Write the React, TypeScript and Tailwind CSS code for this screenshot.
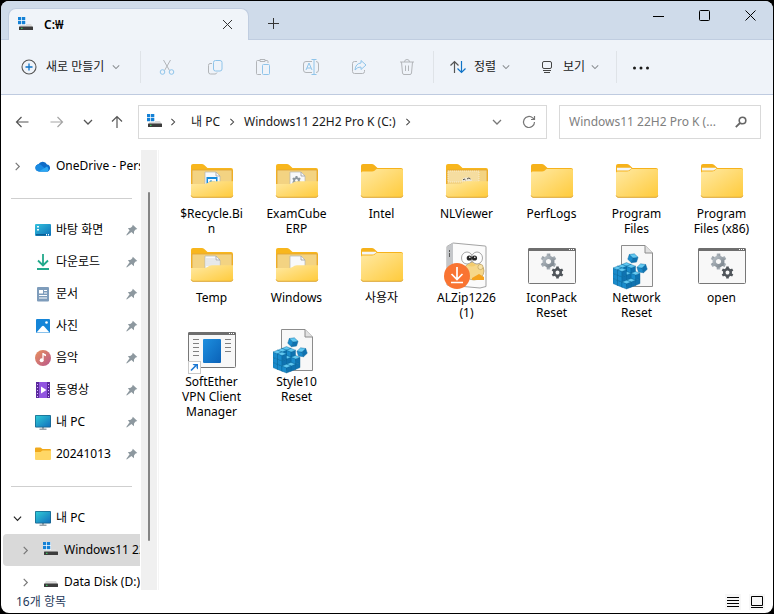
import type { ReactNode } from "react";

type IconProps = { className?: string };

type PlaceItem = {
  label: string;
  icon: ReactNode;
};

type FileItem = {
  label: string;
  icon: ReactNode;
};

function Chevron({ className, dir = "down" }: IconProps & { dir?: "down" | "right" }) {
  return (
    <svg className={className} viewBox="0 0 10 10" fill="none" stroke="currentColor" aria-hidden="true">
      <path d={dir === "down" ? "M1 3l4 4 4-4" : "M3 1l4 4-4 4"} strokeWidth="1.3" />
    </svg>
  );
}

function DriveIcon({ windows = true }: { windows?: boolean }) {
  return (
    <svg className="h-4 w-4 shrink-0" viewBox="0 0 16 16" aria-hidden="true">
      <path d="M3 7h10l2 3.500H1z" fill="#dcdcdc" />
      <rect x="1" y="9.500" width="14" height="3.500" rx=".6" fill="#3c3c3c" />
      <rect x="3" y="10.800" width="1.500" height="1" fill="#3fe06a" />
      {windows ? (
        <>
          <path d="M0 0h8v8H0z" fill="#fff" />
          <path d="M0 0h3.300v3.300H0zM4 0h3.300v3.300H4zM0 4h3.300v3.300H0zM4 4h3.300v3.300H4z" fill="#1481d6" />
        </>
      ) : null}
    </svg>
  );
}

function PinIcon() {
  return (
    <svg className="h-3 w-3 shrink-0" viewBox="0 0 12 12" fill="#8d989f" aria-hidden="true">
      <path d="M6.800.8L11.300 5l-1.700.6-1.500 1.600-.2 3L5.400 7.900.8 11.400l-.5-.4 3.300-4.700L1.800 4.200l3-.4 1.500-1.500z" />
    </svg>
  );
}

function CloudIcon() {
  return (
    <svg className="h-4 w-4 shrink-0" viewBox="0 0 16 16" aria-hidden="true">
      <path d="M4 13.500a3.700 3.700 0 0 1-.6-7.300A4.800 4.800 0 0 1 12 6.500a3.600 3.600 0 0 1 .5 7z" fill="#0f6cc8" />
      <path d="M4 13.500a3.700 3.700 0 0 1-3-5.800c2-2 4-1.300 5-.8l7.500 6.500z" fill="#1a8be2" />
      <path d="M4 13.500l8-5a3.600 3.600 0 0 1 .5 5z" fill="#2ba8f3" />
    </svg>
  );
}

function DesktopIcon() {
  return (
    <svg className="h-4 w-4 shrink-0" viewBox="0 0 16 16" aria-hidden="true">
      <defs>
        <linearGradient id="desk" x1="0" y1="0" x2="1" y2="1">
          <stop stopColor="#35c1dd" />
          <stop offset="1" stopColor="#0b6fb8" />
        </linearGradient>
      </defs>
      <rect y="2" width="16" height="12" rx="1" fill="url(#desk)" />
      <path d="M2 4h2v1.500H2zM2 7h2v1.500H2z" fill="#e9fbff" />
      <path d="M1 12h10v1.500H1z" fill="#0a5d94" />
      <path d="M11 12h1v1.500h-1zM13 12h1v1.500h-1z" fill="#fff" />
    </svg>
  );
}

function DownloadIcon() {
  return (
    <svg className="h-4 w-4 shrink-0" viewBox="0 0 16 16" fill="none" stroke="#22a98b" strokeWidth="1.800" aria-hidden="true">
      <path d="M8 0v11M3 6.500l5 5 5-5M2 15h12" />
    </svg>
  );
}

function DocumentIcon() {
  return (
    <svg className="h-4 w-4 shrink-0" viewBox="0 0 16 16" aria-hidden="true">
      <rect x="2" y="1" width="12" height="14.500" rx="1" fill="#7e9cbb" />
      <path d="M4 4h4v3.500H4zM9 4h3v1H9zM9 6.500h3v1H9zM4 9h8v1H4zM4 11.500h8v1H4z" fill="#fff" />
    </svg>
  );
}

function PictureIcon() {
  return (
    <svg className="h-4 w-4 shrink-0" viewBox="0 0 16 16" aria-hidden="true">
      <rect x="1" y="1" width="14" height="14" rx="1" fill="#1585d8" />
      <path d="M1.500 14.500l5.500-6.200q1-1 2 0l5.500 6.200z" fill="#fff" />
      <circle cx="11.500" cy="4.500" r="1.300" fill="#fff" />
    </svg>
  );
}

function MusicIcon() {
  return (
    <svg className="h-4 w-4 shrink-0" viewBox="0 0 16 16" aria-hidden="true">
      <defs>
        <linearGradient id="music" x1="0" y1="0" x2="1" y2="1">
          <stop stopColor="#e8915c" />
          <stop offset="1" stopColor="#b9578c" />
        </linearGradient>
      </defs>
      <circle cx="8" cy="8" r="8" fill="url(#music)" />
      <path d="M8 3v6.500" stroke="#fff" strokeWidth="1.300" />
      <path d="M8 3l3 1.500v1.700L8 5z" fill="#fff" />
      <circle cx="6.700" cy="10.300" r="2" fill="#fff" />
    </svg>
  );
}

function VideoIcon() {
  return (
    <svg className="h-4 w-4 shrink-0" viewBox="0 0 16 16" aria-hidden="true">
      <rect x="1" y="0" width="14" height="16" rx="1" fill="#9154e0" />
      <path d="M1 0h3v16H1zM12 0h3v16h-3z" fill="#5b2a9d" />
      <path d="M2 2h1v1H2zM2 5h1v1H2zM2 8h1v1H2zM2 11h1v1H2zM2 14h1v1H2zM13 2h1v1h-1zM13 5h1v1h-1zM13 8h1v1h-1zM13 11h1v1h-1zM13 14h1v1h-1z" fill="#d6b9ff" />
      <path d="M6 4.500v7l5.500-3.500z" fill="#fff" />
    </svg>
  );
}

function PcIcon() {
  return (
    <svg className="h-4 w-4 shrink-0" viewBox="0 0 16 16" aria-hidden="true">
      <defs>
        <linearGradient id="pc" x1="0" y1="0" x2="1" y2="1">
          <stop stopColor="#2fcbd6" />
          <stop offset="1" stopColor="#1270bd" />
        </linearGradient>
      </defs>
      <path d="M7 13h2v2H7zM4.500 14.500h7V16h-7z" fill="#9aa4ab" />
      <rect y="1" width="16" height="12.500" rx="1" fill="#175f86" />
      <rect x=".7" y="1.700" width="14.600" height="11" fill="url(#pc)" />
    </svg>
  );
}

function SmallFolderIcon() {
  return (
    <svg className="h-4 w-4 shrink-0" viewBox="0 0 16 16" aria-hidden="true">
      <path d="M0 2.500q0-1 1-1h4.500L7.500 3H15q1 0 1 1v4H0z" fill="#f0a91c" />
      <path d="M0 6h5.500l2-1.500H16V13q0 1-1 1H1q-1 0-1-1z" fill="#ffd766" />
    </svg>
  );
}

function FolderDefs() {
  return (
    <svg className="absolute h-0 w-0" aria-hidden="true">
      <defs>
        <linearGradient id="folderFront" x1="0" y1="0" x2="1" y2="1">
          <stop stopColor="#ffe9a3" />
          <stop offset="1" stopColor="#ffcb3c" />
        </linearGradient>
        <linearGradient id="blueSheet" x1="0" y1="0" x2="1" y2="1">
          <stop stopColor="#1d8fdf" />
          <stop offset="1" stopColor="#0b62b8" />
        </linearGradient>
        <linearGradient id="gearLight" x1="0" y1="0" x2="1" y2="1">
          <stop stopColor="#b4bcc3" />
          <stop offset="1" stopColor="#7d868e" />
        </linearGradient>
      </defs>
    </svg>
  );
}

function FolderIcon({ paper = false }: { paper?: boolean }) {
  return (
    <svg className="h-12 w-12" viewBox="0 0 48 48" aria-hidden="true">
      <path d="M3 8q0-2 2-2h9q1 0 2 .8L19.500 10H43q2 0 2 2v20H3z" fill="#f6b21b" />
      <path d="M3 15q0-1.500 1.500-1.500H14q1.500 0 2.500-.8l2-1.700H43.500q1.500 0 1.500 1.500V37q0 2-2 2H5q-2 0-2-2z" fill="url(#folderFront)" />
      {paper ? <path d="M4 12.500h11.500l3-2-.8-.7H4z" fill="#f3f6fa" /> : null}
      <path d="M3.200 37.500Q3.800 39.300 5 39.300H43q1.500 0 1.800-1.800" fill="none" stroke="#dda32a" strokeWidth="1" />
    </svg>
  );
}

function OpenFolderIcon({ kind }: { kind: "image" | "gear" | "lines" | "blank" | "face" }) {
  return (
    <svg className="h-12 w-12" viewBox="0 0 48 48" aria-hidden="true">
      <path d="M3 8q0-2 2-2h9q1 0 2 .8L19.500 10H43q2 0 2 2v24H3z" fill="#f8b61d" />
      <path d="M4 12h40v24H4z" fill="#f3d382" />
      <path d="M4 12h40v24H4z" fill="none" stroke="#dfa336" strokeWidth=".8" />
      {kind === "face" ? (
        <>
          <path d="M5 13h31v11H5z" fill="#f5dda0" stroke="#fff" strokeWidth=".5" strokeDasharray="1 1" />
          <path d="M19 23q0-4 5-3.500Q28 19 29 23z" fill="#eee8d8" />
          <path d="M20 22q1-2 2.500 0M24 21q2-2 3.500 0" fill="none" stroke="#54504a" />
        </>
      ) : (
        <>
          <path d="M17 14h11l4 4v12H17z" fill="#f8f9fb" stroke="#b2b4b6" strokeWidth=".7" />
          <path d="M28 14v4h4" fill="none" stroke="#999da0" strokeWidth=".8" />
        </>
      )}
      {kind === "image" ? <path d="M18.500 19h11v8h-11zM20 21v4h8v-4z" fill="#168bdd" fillRule="evenodd" /> : null}
      {kind === "image" ? <path d="M20 25l3-3 2 2 1-1 2 2z" fill="#168bdd" /> : null}
      {kind === "gear" ? (
        <g transform="translate(23.500 22.500)">
          <Gear fill="#8d979e" scale={0.55} />
        </g>
      ) : null}
      {kind === "lines" ? <path d="M18 17h9M18 19h13M18 21h13M18 23h13" stroke="#ccd0d3" strokeWidth=".8" /> : null}
      <path d="M3 26h13q2 0 3.500-1l2-1.200q1-.5 2.500-.5H45V37q0 2-2 2H5q-2 0-2-2z" fill="url(#folderFront)" />
      <path d="M3.200 37.500Q3.800 39.300 5 39.300H43q1.500 0 1.800-1.800" fill="none" stroke="#dda32a" strokeWidth="1" />
    </svg>
  );
}

function Gear({ fill, scale = 1, teeth = 6 }: { fill: string; scale?: number; teeth?: number }) {
  return (
    <g transform={`scale(${scale})`}>
      {Array.from({ length: teeth }, (_, i) => (
        <path key={i} d="M-2 -4L-1.700 -8h3.400L2 -4z" fill={fill} transform={`rotate(${(i * 360) / teeth})`} />
      ))}
      <circle r="4.300" fill="none" stroke={fill} strokeWidth="3.400" />
    </g>
  );
}

function WindowFrame() {
  return (
    <>
      <path d="M1.500 6.500h45q1 0 1 1v33q0 1-1 1h-45q-1 0-1-1v-33q0-1 1-1z" fill="#f8f8f8" stroke="#777" />
      <path d="M0 7.500q0-1.500 1.500-1.500h45q1.500 0 1.500 1.500V9H0z" fill="#6e6e6e" />
      <path d="M41 7h1v1h-1zM43 7h1v1h-1zM45 7h1v1h-1z" fill="#fff" />
    </>
  );
}

function BatchIcon() {
  return (
    <svg className="h-12 w-12" viewBox="0 0 48 48" aria-hidden="true">
      <WindowFrame />
      <g transform="translate(20.500 19.500)">
        <Gear fill="url(#gearLight)" />
      </g>
      <g transform="translate(29.500 30.500)">
        <Gear fill="#50555a" scale={0.75} />
      </g>
    </svg>
  );
}

function VpnIcon() {
  return (
    <svg className="h-12 w-12" viewBox="0 0 48 48" aria-hidden="true">
      <WindowFrame />
      <path d="M5 13.500h6M5 17.500h6M5 21.500h6M5 25.500h6M5 29.500h6M37 13.500h6M37 17.500h6M37 21.500h6M37 25.500h6" stroke="#808080" />
      <rect x="15" y="13" width="18" height="24" rx="1" fill="url(#blueSheet)" />
      <rect x=".5" y="35.500" width="12" height="12" fill="#fff" stroke="#c9c9c9" />
      <path d="M3 44.500l5.500-5.500" stroke="#1976d2" strokeWidth="1.600" />
      <path d="M4.500 38H10v5.500L8.500 42V39.500H6z" fill="#1976d2" />
    </svg>
  );
}

function Cube({ x, y, w = 4.5, t = 1.8, h = 5.2 }: { x: number; y: number; w?: number; t?: number; h?: number }) {
  return (
    <g transform={`translate(${x} ${y})`} stroke="#07649b" strokeWidth=".4" strokeLinejoin="round">
      <path d={`M0 0L${-w} ${-t}V${-t - h}L0 ${-h}z`} fill="#1a8bcb" />
      <path d={`M0 0L${w} ${-t}V${-t - h}L0 ${-h}z`} fill="#0f72b0" />
      <path d={`M0 ${-h}L${-w} ${-t - h}L0 ${-2 * t - h}L${w} ${-t - h}z`} fill="#62c9f2" />
    </g>
  );
}

// stack heights, indexed [right][left] from the front corner, back cells first
const cubeStacks = [
  [2, 2, 3],
  [2, 1, 3],
  [1, 2, 3],
  [2, 0, 2],
  [1, 1, 2],
  [0, 2, 3],
  [1, 0, 1],
  [0, 1, 3],
  [0, 0, 1]
];

function RegistryIcon() {
  return (
    <svg className="h-12 w-12" viewBox="0 0 48 48" aria-hidden="true">
      <path d="M8.500 3.500h23.500l7.500 7.500v33.500h-31z" fill="#f8f8f8" stroke="#8c8c8c" />
      <path d="M32 3.500V11h7.500" fill="#e1e1e1" stroke="#8c8c8c" />
      {cubeStacks.map(([i, j, height]) =>
        Array.from({ length: height }, (_, k) => (
          <Cube key={`${i}${j}${k}`} x={13.5 + (i - j) * 4.5} y={47 - (i + j) * 1.8 - k * 5.2} />
        ))
      )}
      <g transform="rotate(18 20 16)">
        <Cube x={20} y={21} w={4.6} t={2.2} h={5} />
      </g>
      <g transform="rotate(-18 29 26)">
        <Cube x={29} y={31} w={4.6} t={2.2} h={5} />
      </g>
    </svg>
  );
}

function AlzipIcon() {
  return (
    <svg className="h-12 w-12" viewBox="0 0 48 48" aria-hidden="true">
      <path d="M4 4.500L10 1l32 3q1 0 1 1v39.500l-6 1.500L4 43z" fill="#fbfbfb" stroke="#8c8c8c" strokeWidth=".8" />
      <path d="M4 4.500L10 1v42.500L4 42z" fill="#c4c6c9" />
      <path d="M6.500 8v2M6.500 11v4" stroke="#5c5c5c" />
      <ellipse cx="31" cy="29" rx="10" ry="9" fill="#f6d78a" stroke="#b59857" strokeWidth=".7" />
      <path d="M29 36l7-4 5 3v3H29z" fill="#f5a21e" />
      <ellipse cx="24" cy="16" rx="5.500" ry="6" fill="#fff" stroke="#909090" strokeWidth=".8" />
      <ellipse cx="34" cy="16" rx="5.500" ry="6" fill="#fff" stroke="#909090" strokeWidth=".8" />
      <circle cx="26.300" cy="16" r="2.600" fill="#272727" />
      <circle cx="31.500" cy="16" r="2.600" fill="#272727" />
      <circle cx="26.800" cy="15.300" r=".8" fill="#fff" />
      <circle cx="31.800" cy="15.300" r=".8" fill="#fff" />
      <path d="M24 23q5-4 9 0-4 3-9 0z" fill="#f3cb6c" />
      <circle cx="37.500" cy="25" r="2.600" fill="#f9e2a6" stroke="#b59857" strokeWidth=".6" />
      <circle cx="14" cy="34" r="13" fill="#f97432" />
      <path d="M14 25v12M8.500 32l5.500 5.500 5.500-5.500M8 40.500h12" fill="none" stroke="#fff" strokeWidth="1.700" />
    </svg>
  );
}

const places: PlaceItem[] = [
  { label: "바탕 화면", icon: <DesktopIcon /> },
  { label: "다운로드", icon: <DownloadIcon /> },
  { label: "문서", icon: <DocumentIcon /> },
  { label: "사진", icon: <PictureIcon /> },
  { label: "음악", icon: <MusicIcon /> },
  { label: "동영상", icon: <VideoIcon /> },
  { label: "내 PC", icon: <PcIcon /> },
  { label: "20241013", icon: <SmallFolderIcon /> }
];

const files: FileItem[] = [
  { label: "$Recycle.Bin", icon: <OpenFolderIcon kind="image" /> },
  { label: "ExamCube ERP", icon: <OpenFolderIcon kind="gear" /> },
  { label: "Intel", icon: <FolderIcon /> },
  { label: "NLViewer", icon: <OpenFolderIcon kind="face" /> },
  { label: "PerfLogs", icon: <FolderIcon /> },
  { label: "Program Files", icon: <FolderIcon paper /> },
  { label: "Program Files (x86)", icon: <FolderIcon paper /> },
  { label: "Temp", icon: <OpenFolderIcon kind="lines" /> },
  { label: "Windows", icon: <OpenFolderIcon kind="blank" /> },
  { label: "사용자", icon: <FolderIcon paper /> },
  { label: "ALZip1226 (1)", icon: <AlzipIcon /> },
  { label: "IconPack Reset", icon: <BatchIcon /> },
  { label: "Network Reset", icon: <RegistryIcon /> },
  { label: "open", icon: <BatchIcon /> },
  { label: "SoftEther VPN Client Manager", icon: <VpnIcon /> },
  { label: "Style10 Reset", icon: <RegistryIcon /> }
];

const editActions = [
  {
    name: "잘라내기",
    icon: (
      <>
        <path d="M4.500 1l6 10.500M11.500 1l-6 10.500" stroke="#b2b5b9" />
        <circle cx="3.500" cy="13" r="2.300" stroke="#8fc4ea" />
        <circle cx="12.500" cy="13" r="2.300" stroke="#8fc4ea" />
      </>
    )
  },
  {
    name: "복사",
    icon: (
      <>
        <path d="M5 4.500H3q-1.500 0-1.500 2v6.500q0 2 2 2H8q1.500 0 2-1.500" stroke="#b2b5b9" />
        <rect x="6.500" y="1.500" width="8.500" height="10.500" rx="2" stroke="#8fc4ea" />
      </>
    )
  },
  {
    name: "붙여넣기",
    icon: (
      <>
        <path d="M6 15.500H2.500q-1 0-1-1v-12q0-1 1-1H5M10 1.500h2q1 0 1 1V4M5 .5h5v2H5z" stroke="#b2b5b9" />
        <rect x="7.500" y="5.500" width="7" height="10" rx="1" stroke="#8fc4ea" />
      </>
    )
  },
  {
    name: "이름 바꾸기",
    icon: (
      <>
        <path d="M9 13.500H3q-2.500 0-2.500-2.500V5q0-2.500 2.500-2.500h6M13 2.500q2.500 0 2.500 2.500v6q0 2.500-2.500 2.500" stroke="#b2b5b9" />
        <path d="M3 11l3-7 3 7M4 9h4M11 .5v15M8.500.5h5M8.500 15.500h5" stroke="#8fc4ea" />
      </>
    )
  },
  {
    name: "공유",
    icon: (
      <>
        <path d="M6 2.500H3.500q-2 0-2 2v8q0 2 2 2h8q2 0 2-2V11" stroke="#b2b5b9" />
        <path d="M10 1.500l5 4.500-5 4.500V8q-3.500-.3-6 3 .5-6.500 6-7z" stroke="#8fc4ea" strokeLinejoin="round" />
      </>
    )
  },
  {
    name: "삭제",
    icon: <path d="M1 3h14M5.500 3q0-2.500 2.500-2.500T10.500 3M2.500 3l1 11q.2 1.500 1.500 1.500h6q1.300 0 1.500-1.500l1-11M6.500 6.500v5.500M9.500 6.500v5.500" stroke="#b2b5b9" />
  }
];

function TitleBar() {
  return (
    <header className="flex h-[39px] items-end border-b border-[#c0cde0] bg-[#cfdbea] pl-[7px]">
      <div className="-mb-px flex h-8 w-[241px] items-center rounded-t-lg border border-b-0 border-[#c0cde0] bg-[#f0f4f9] pr-[13px] pl-[9px]">
        <DriveIcon />
        <span className="ml-[10px] flex-1 text-xs font-semibold text-black">C:₩</span>
        <button className="grid h-4 w-4 place-items-center" aria-label="탭 닫기">
          <svg className="h-[9px] w-[9px]" viewBox="0 0 9 9" stroke="#333" aria-hidden="true">
            <path d="M0 0l9 9M9 0L0 9" />
          </svg>
        </button>
      </div>
      <button className="grid h-8 w-12 place-items-center" aria-label="새 탭">
        <svg className="h-[11px] w-[11px]" viewBox="0 0 11 11" stroke="#333" aria-hidden="true">
          <path d="M5.500 0v11M0 5.500h11" />
        </svg>
      </button>
      <div className="ml-auto flex items-center self-start">
        <button className="grid h-7 w-[46px] place-items-center" aria-label="최소화">
          <svg className="h-[11px] w-[11px]" viewBox="0 0 11 11" stroke="#000" aria-hidden="true">
            <path d="M0 6.500h11" />
          </svg>
        </button>
        <button className="grid h-7 w-[46px] place-items-center" aria-label="최대화">
          <svg className="h-[11px] w-[11px]" viewBox="0 0 11 11" fill="none" stroke="#000" aria-hidden="true">
            <rect x=".5" y=".5" width="10" height="10" rx="1" />
          </svg>
        </button>
        <button className="grid h-7 w-[46px] place-items-center" aria-label="닫기">
          <svg className="h-[11px] w-[11px]" viewBox="0 0 11 11" stroke="#000" aria-hidden="true">
            <path d="M.5.5l10 10M10.500.5l-10 10" />
          </svg>
        </button>
      </div>
    </header>
  );
}

function Toolbar() {
  return (
    <div className="flex h-[55px] items-center border-b border-[#bfcbe0] bg-[#eff3f9] text-xs text-[#1a1a1a]">
      <button className="flex h-8 w-[139px] items-center pl-5">
        <svg className="mr-[9px] h-4 w-4" viewBox="0 0 16 16" fill="none" aria-hidden="true">
          <circle cx="8" cy="8" r="7" stroke="#555" strokeWidth="1.100" />
          <path d="M8 4.500v7M4.500 8h7" stroke="#0f73c7" strokeWidth="1.300" />
        </svg>
        새로 만들기
        <Chevron className="ml-2 h-2 w-2 text-[#8a8d91]" />
      </button>
      <span className="h-8 w-px bg-[#dfe3e8]" />
      <div className="flex px-0.5">
        {editActions.map((action) => (
          <button key={action.name} className="grid h-8 w-12 place-items-center" aria-label={action.name} disabled>
            <svg className="h-4 w-4" viewBox="0 0 16 16" fill="none" aria-hidden="true">
              {action.icon}
            </svg>
          </button>
        ))}
      </div>
      <span className="h-8 w-px bg-[#dfe3e8]" />
      <button className="flex h-8 w-[89px] items-center pl-4">
        <svg className="mr-2 h-4 w-4" viewBox="0 0 16 16" fill="none" strokeWidth="1.200" aria-hidden="true">
          <path d="M4.500 14V2.500M.5 6.500l4-4 4 4" stroke="#555" />
          <path d="M11.500 2v11.500M7.500 9.500l4 4 4-4" stroke="#0f73c7" />
        </svg>
        정렬
        <Chevron className="ml-[6px] h-2 w-2 text-[#8a8d91]" />
      </button>
      <button className="mr-1 flex h-8 w-[89px] items-center pl-4">
        <svg className="mr-2 h-4 w-4" viewBox="0 0 16 16" fill="none" stroke="#444" aria-hidden="true">
          <rect x="3.500" y="2.500" width="9" height="7" rx="1.500" />
          <path d="M4 11.500h8M5 13.500h6" />
        </svg>
        보기
        <Chevron className="ml-[6px] h-2 w-2 text-[#8a8d91]" />
      </button>
      <span className="h-8 w-px bg-[#dfe3e8]" />
      <button className="grid h-8 w-12 place-items-center" aria-label="자세히">
        <svg className="h-4 w-4" viewBox="0 0 16 16" fill="#1a1a1a" aria-hidden="true">
          <circle cx="1.500" cy="9" r="1.500" />
          <circle cx="8" cy="9" r="1.500" />
          <circle cx="14.500" cy="9" r="1.500" />
        </svg>
      </button>
    </div>
  );
}

function NavigationRow() {
  return (
    <div className="flex h-[55px] items-start gap-3 pt-[10px] pr-3 text-xs text-[#1a1a1a]">
      <div className="flex h-[34px] w-[125px] shrink-0 items-center pl-[14px] text-[#555]">
        <button aria-label="뒤로">
          <svg className="h-[14px] w-[14px]" viewBox="0 0 14 14" fill="none" stroke="currentColor" strokeWidth="1.200" aria-hidden="true">
            <path d="M13.500 7H1.500M6.500 2l-5 5 5 5" />
          </svg>
        </button>
        <button className="ml-[21px] text-[#a5a5a5]" aria-label="앞으로" disabled>
          <svg className="h-[14px] w-[14px]" viewBox="0 0 14 14" fill="none" stroke="currentColor" strokeWidth="1.200" aria-hidden="true">
            <path d="M.5 7h12M7.500 2l5 5-5 5" />
          </svg>
        </button>
        <button className="ml-[19px]" aria-label="최근 위치">
          <Chevron className="h-[10px] w-[10px]" />
        </button>
        <button className="ml-[17px]" aria-label="위로">
          <svg className="h-[14px] w-[14px]" viewBox="0 0 14 14" fill="none" stroke="currentColor" strokeWidth="1.200" aria-hidden="true">
            <path d="M7 13V1.500M2 6.500l5-5 5 5" />
          </svg>
        </button>
      </div>
      <nav className="flex h-[34px] min-w-0 flex-1 items-center border border-[#d9d9d9] bg-white px-2" aria-label="주소">
        <DriveIcon />
        <Chevron dir="right" className="mx-[6px] h-2 w-2 stroke-2 text-[#444]" />
        <button className="px-2 whitespace-nowrap">내 PC</button>
        <Chevron dir="right" className="h-2 w-2 text-[#444]" />
        <button className="px-2 whitespace-nowrap">Windows11 22H2 Pro K (C:)</button>
        <Chevron dir="right" className="h-2 w-2 text-[#444]" />
        <button className="ml-auto" aria-label="이전 위치">
          <Chevron className="h-[10px] w-[10px] text-[#777]" />
        </button>
        <button className="mr-[2px] ml-5" aria-label="새로 고침">
          <svg className="h-[14px] w-[14px]" viewBox="0 0 14 14" fill="none" stroke="#777" strokeWidth="1.200" aria-hidden="true">
            <path d="M12.500 7a5.500 5.500 0 1 1-1.800-4.100L12.500 4.500M12.500 1v3.500H9" />
          </svg>
        </button>
      </nav>
      <label className="flex h-[34px] w-[202px] shrink-0 items-center border border-[#d9d9d9] bg-white pr-[13px] pl-[9px]">
        <input
          type="search"
          aria-label="검색"
          placeholder="Windows11 22H2 Pro K (..."
          className="min-w-0 flex-1 text-xs outline-none placeholder:text-[#808080]"
        />
        <svg className="h-3 w-3 shrink-0" viewBox="0 0 12 12" fill="none" stroke="#666" aria-hidden="true">
          <circle cx="7.500" cy="4.500" r="3.300" strokeWidth="1.600" />
          <path d="M5 7L.8 11.200" strokeWidth="1.800" />
        </svg>
      </label>
    </div>
  );
}

function Sidebar() {
  return (
    <aside className="flex w-[158px] shrink-0 border-r border-[#f5f5f5]">
      <div className="flex w-[139px] flex-col overflow-hidden text-xs text-black">
        <button className="flex h-8 shrink-0 items-center whitespace-nowrap">
          <Chevron dir="right" className="mr-[13px] ml-3 h-[9px] w-[9px] shrink-0 text-[#777]" />
          <CloudIcon />
          <span className="ml-[5px]">OneDrive - Personal</span>
        </button>
        <div className="flex h-8 shrink-0 items-center pr-2 pl-[10px]">
          <hr className="w-full border-[#cfcfcf]" />
        </div>
        {places.map((place) => (
          <button key={place.label} className="flex h-8 shrink-0 items-center pr-[2px] pl-[34px] text-left">
            {place.icon}
            <span className="ml-[5px] flex-1">{place.label}</span>
            <PinIcon />
          </button>
        ))}
        <div className="flex h-8 shrink-0 items-center pr-2 pl-[10px]">
          <hr className="w-full border-[#cfcfcf]" />
        </div>
        <button className="flex h-8 shrink-0 items-center">
          <Chevron className="mr-[13px] ml-3 h-[9px] w-[9px] shrink-0 text-[#222]" />
          <PcIcon />
          <span className="ml-[5px]">내 PC</span>
        </button>
        <button className="ml-[2px] flex h-8 shrink-0 items-center rounded-l-sm bg-[#d9d9d9] whitespace-nowrap">
          <Chevron dir="right" className="mr-[13px] ml-[18px] h-[9px] w-[9px] shrink-0 text-[#777]" />
          <DriveIcon />
          <span className="ml-[5px]">Windows11 22H2 Pro K (C:)</span>
        </button>
        <button className="ml-[2px] flex h-8 shrink-0 items-center whitespace-nowrap">
          <Chevron dir="right" className="mr-[13px] ml-[18px] h-[9px] w-[9px] shrink-0 text-[#777]" />
          <DriveIcon windows={false} />
          <span className="ml-[5px]">Data Disk (D:)</span>
        </button>
      </div>
      <div className="ml-px flex w-4 justify-center bg-[#f0f0f0] pt-[42px] pb-[49px]">
        <span className="w-[2px] rounded bg-[#858585]" />
      </div>
    </aside>
  );
}

export default function App() {
  return (
    <div className="h-screen bg-black p-px font-['Noto_Sans','Noto_Sans_CJK_KR',sans-serif]">
      <FolderDefs />
      <div className="flex h-full flex-col overflow-hidden rounded-lg bg-white">
        <TitleBar />
        <Toolbar />
        <NavigationRow />
        <div className="flex min-h-0 flex-1">
          <Sidebar />
          <main className="grid flex-1 auto-rows-[84px] grid-cols-[repeat(auto-fill,85px)] content-start pt-2 pl-[10px]">
            {files.map((file) => (
              <button key={file.label} className="flex flex-col items-center self-start px-3 text-center text-xs text-black">
                {file.icon}
                <span className="w-16 leading-[15px] wrap-anywhere">{file.label}</span>
              </button>
            ))}
          </main>
        </div>
        <footer className="flex h-[23px] shrink-0 items-center justify-between pr-2 pl-[15px] text-xs text-[#1e395b]">
          <span>16개 항목</span>
          <div className="flex gap-2">
            <button className="grid h-4 w-4 place-items-center bg-[#f7f7f7]" aria-label="자세히 보기">
              <svg className="h-3 w-3" viewBox="0 0 12 12" stroke="#000" aria-hidden="true">
                <path d="M0 1.500h12M0 4.500h12M0 7.500h12M0 10.500h12" />
              </svg>
            </button>
            <button className="grid h-4 w-4 place-items-center bg-[#f7f7f7]" aria-label="큰 아이콘">
              <svg className="h-3 w-3" viewBox="0 0 12 12" fill="none" stroke="#000" aria-hidden="true">
                <path d="M.5.500h11v9H.5zM0 11.500h12" />
              </svg>
            </button>
          </div>
        </footer>
      </div>
    </div>
  );
}
